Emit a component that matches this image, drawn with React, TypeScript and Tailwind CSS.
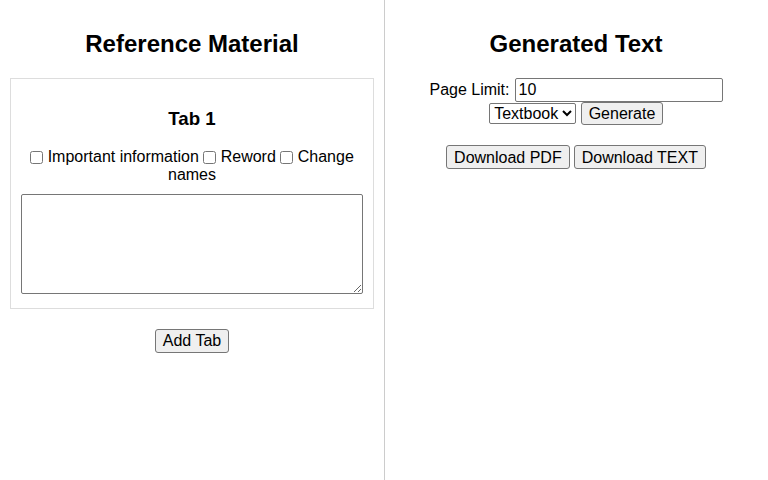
export default function App() {
  const btn =
    'border border-[#767676] bg-[#efefef] rounded-[3px] py-[1px] text-[16px] leading-[19px] text-black';

  return (
    <div className="flex h-[480px] w-[768px] bg-white text-black font-['Liberation_Sans',Arial,sans-serif] text-[16px]">
      {/* left column */}
      <div className="w-[385px] shrink-0 border-r border-[#ccc] p-[10px] text-center">
        <h2 className="my-[20px] text-[24px] font-bold leading-[28px]">Reference Material</h2>
        <div className="border border-[#ddd] p-[10px]">
          <h3 className="mt-[19px] mb-[18px] text-[18.72px] font-bold leading-[22px]">Tab 1</h3>
          <div className="leading-[18.4px]">
            <label>
              <input type="checkbox" className="m-0 align-[-2px] h-[13px] w-[13px]" /> Important information
            </label>{' '}
            <label>
              <input type="checkbox" className="m-0 align-[-2px] h-[13px] w-[13px]" /> Reword
            </label>{' '}
            <label>
              <input type="checkbox" className="m-0 align-[-2px] h-[13px] w-[13px]" /> Change names
            </label>
          </div>
          <textarea className="mt-[9px] mb-[4px] block h-[100px] w-full resize-y border border-[#767676] rounded-[2px]" />
        </div>
        <button className={`${btn} mt-[20px] h-[24px] px-[6.5px]`}>Add Tab</button>
      </div>

      {/* right column */}
      <div className="flex-1 py-[10px] pl-[9px] pr-[10px] text-center">
        <h2 className="my-[20px] text-[24px] font-bold leading-[28px]">Generated Text</h2>
        <div className="flex items-center justify-center gap-[5px]">
          <span>Page Limit:</span>
          <input
            type="text"
            defaultValue="10"
            className="h-[24px] w-[208px] border border-[#767676] rounded-[2px] px-[3px] text-[16px]"
          />
        </div>
        <div className="flex items-center justify-center gap-[5px]">
          <select className="h-[21px] w-[87px] border border-[#767676] rounded-[2px] text-[16px] leading-[19px] appearance-auto">
            <option>Textbook</option>
          </select>
          <button className={`${btn} h-[23px] px-[6.5px]`}>Generate</button>
        </div>
        <div className="mt-[20px] flex items-center justify-center gap-[4px]">
          <button className={`${btn} h-[24px] px-[7px]`}>Download PDF</button>
          <button className={`${btn} h-[24px] px-[7px]`}>Download TEXT</button>
        </div>
      </div>
    </div>
  );
}
